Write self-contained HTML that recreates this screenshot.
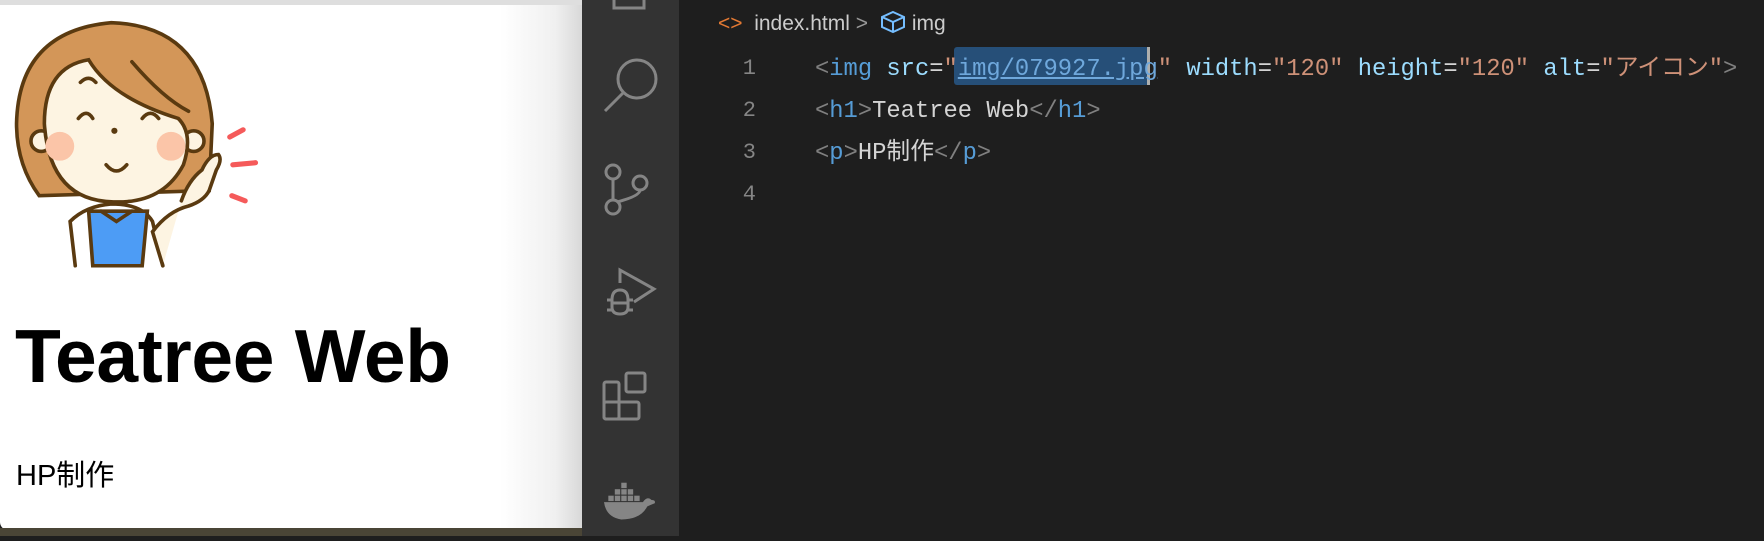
<!DOCTYPE html>
<html><head><meta charset="utf-8"><style>
*{margin:0;padding:0;box-sizing:border-box}
body{width:1764px;height:536px;overflow:hidden;background:#1e1e1e;position:relative;font-family:"Liberation Sans","Noto Sans CJK JP",sans-serif}
#left{position:absolute;left:0;top:0;width:582px;height:530px;background:linear-gradient(to right,#fff 0,#fff 500px,#f0f0f0 555px,#d8d8d8 582px);border-top:5px solid #dedede;border-bottom-left-radius:8px}
#strip{position:absolute;left:0;top:528px;width:582px;height:8px;background:#4a4536}
h1{position:absolute;left:15px;top:308px;font-size:75px;font-weight:bold;color:#000;letter-spacing:-0.3px}
p.hp{position:absolute;left:16px;top:447px;font-size:29px;color:#000}
#act{position:absolute;left:582px;top:0;width:97px;height:536px;background:#333333}
.code{position:absolute;font-family:"Liberation Mono","Noto Sans CJK JP",monospace;font-size:23.8px;line-height:30px;height:30px;white-space:pre;color:#d4d4d4}
.ln{position:absolute;left:732px;width:24px;text-align:right;font-family:"Liberation Mono",monospace;font-size:22px;color:#858585}
.b{color:#808080}.t{color:#569cd6}.a{color:#9cdcfe}.s{color:#ce9178}
#crumb{position:absolute;left:718px;top:10px;font-size:21px;color:#cccccc}
</style></head><body>
<div id="left">
<svg style="position:absolute;left:0;top:-5px" width="300" height="300">
 <g transform="translate(-2,0) scale(1.03)">
 <g stroke="#5a3a10" stroke-width="3.5" stroke-linecap="round" fill="none">
  <path d="M18 120 Q20 30 110 22 Q200 25 208 120 L205 185 L40 190 Q18 160 18 120Z" fill="#d39658"/>
  <path d="M75 258 L70 215 Q85 200 110 198 Q140 198 150 215 L160 258" fill="#fff"/>
  <path d="M92 258 L88 205 L145 205 L140 258Z" fill="#4d9cf5"/>
  <path d="M100 205 L115 215 L130 205"/>
  <circle cx="42" cy="137" r="10" fill="#fdf4e2"/><circle cx="190" cy="137" r="10" fill="#fdf4e2"/>
  <path d="M45 120 Q45 65 88 58 Q110 95 175 115 Q190 130 180 160 Q160 198 112 196 Q50 195 45 120Z" fill="#fdf4e2"/>
  <path d="M130 60 Q160 95 185 108"/>
  <path d="M80 80 Q88 72 95 80"/><path d="M78 115 Q86 105 92 115"/><path d="M140 115 Q148 105 156 115"/>
  <path d="M105 160 Q115 172 125 160"/>
  <path d="M160 258 L150 225 Q165 205 185 200 Q200 195 205 185 L212 165 Q218 155 214 150 Q205 150 198 165 Q185 175 178 195" fill="#fdf4e2"/>
 </g>
 <circle cx="113" cy="127" r="3" fill="#5a3a10"/>
 <circle cx="60" cy="142" r="14" fill="#fbc5a8"/><circle cx="168" cy="142" r="14" fill="#fbc5a8"/>
 <g stroke="#f55a5a" stroke-width="5" stroke-linecap="round">
  <path d="M225 133 L238 126"/><path d="M228 160 L250 158"/><path d="M227 190 L240 195"/>
 </g>
 </g>
</svg>
<h1>Teatree Web</h1>
<p class="hp">HP制作</p>
</div>
<div id="strip"></div>
<div id="act">
 <svg width="97" height="536" viewBox="0 0 97 536" fill="none" stroke="#858585" stroke-width="3">
  <path d="M32 0 V8 H62 V0"/>
  <circle cx="55" cy="79" r="19"/><path d="M41 93 L23 111"/>
  <circle cx="31" cy="172" r="7"/><circle cx="31" cy="207" r="7"/><circle cx="58" cy="183" r="7"/><path d="M31 179 V200 M58 190 Q58 196 35 202"/>
  <path d="M38 283 V270 L72 289 L52 302"/><path d="M30 300 Q30 290 38 290 Q46 290 46 300 V307 Q46 314 38 314 Q30 314 30 307Z M25 300 H30 M46 300 H51 M25 310 H30 M46 310 H51 M30 303 H46"/>
  <rect x="22" y="382" width="15" height="37" rx="2"/><rect x="22" y="402" width="35" height="17" rx="2"/><rect x="44" y="373" width="19" height="19" rx="2"/>
 </svg>
 <svg style="position:absolute;left:22px;top:480px" width="54" height="40" viewBox="0 0 50 36" fill="#858585">
  <rect x="16" y="2" width="5" height="5"/><rect x="10" y="8" width="5" height="5"/><rect x="16" y="8" width="5" height="5"/><rect x="22" y="8" width="5" height="5"/>
  <rect x="4" y="14" width="5" height="5"/><rect x="10" y="14" width="5" height="5"/><rect x="16" y="14" width="5" height="5"/><rect x="22" y="14" width="5" height="5"/><rect x="28" y="14" width="5" height="5"/>
  <path d="M0 20 H36 Q40 14 44 18 Q48 18 47 21 Q42 23 40 24 Q34 36 16 36 Q2 34 0 20Z"/>
 </svg>
</div>
<div id="crumb"><span style="color:#e37933">&lt;&gt;</span>&nbsp; <span>index.html</span> <span style="color:#999">&gt;</span>
<svg style="vertical-align:-4px;margin:0 6px" width="26" height="24" viewBox="0 0 26 24" fill="none" stroke="#75beff" stroke-width="2"><path d="M13 2 L24 7 V17 L13 22 L2 17 V7Z M2 7 L13 12 L24 7 M13 12 V22"/></svg>img</div>
<div style="position:absolute;left:954px;top:47px;width:195px;height:38px;background:#264f78;border-radius:3px"></div>
<div style="position:absolute;left:1147px;top:47px;width:3px;height:38px;background:#aeafad"></div>
<div class="ln" style="top:56px">1</div><div class="ln" style="top:98px">2</div><div class="ln" style="top:140px">3</div><div class="ln" style="top:182px">4</div>
<div class="code" style="left:815px;top:55px"><span class="b">&lt;</span><span class="t">img</span> <span class="a">src</span>=<span class="s">"<u style="color:#6fa8dc">img/079927.jpg</u>"</span> <span class="a">width</span>=<span class="s">"120"</span> <span class="a">height</span>=<span class="s">"120"</span> <span class="a">alt</span>=<span class="s">"アイコン"</span><span class="b">&gt;</span></div>
<div class="code" style="left:815px;top:97px"><span class="b">&lt;</span><span class="t">h1</span><span class="b">&gt;</span>Teatree Web<span class="b">&lt;/</span><span class="t">h1</span><span class="b">&gt;</span></div>
<div class="code" style="left:815px;top:139px"><span class="b">&lt;</span><span class="t">p</span><span class="b">&gt;</span>HP制作<span class="b">&lt;/</span><span class="t">p</span><span class="b">&gt;</span></div>
</body></html>
